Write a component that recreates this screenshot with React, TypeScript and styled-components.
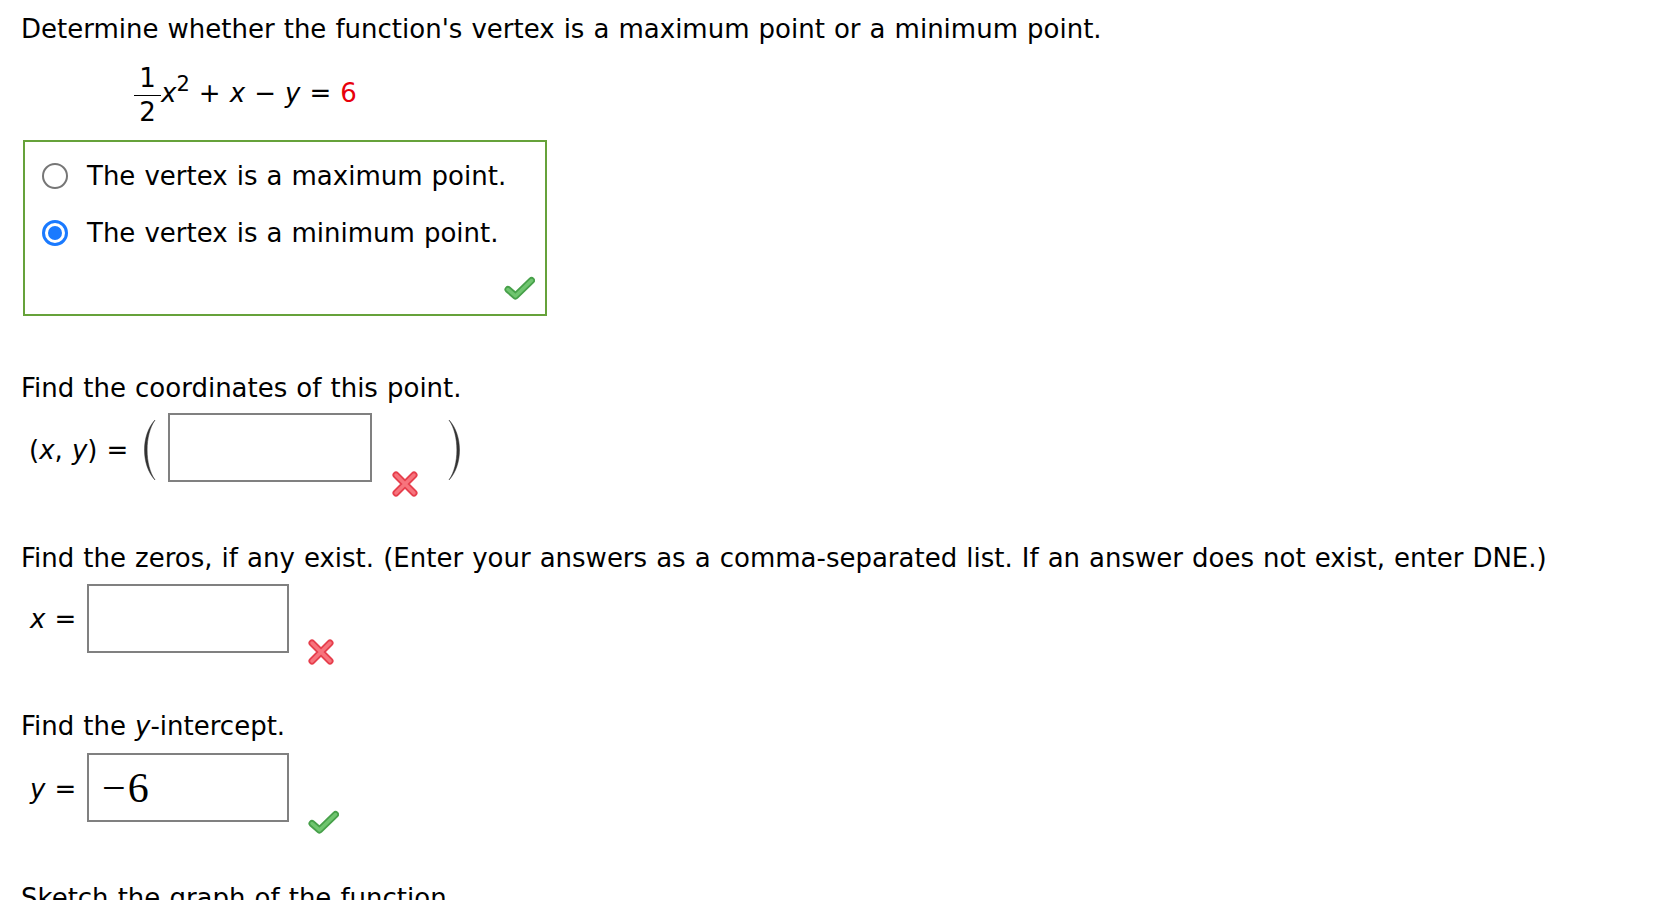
import React from 'react';
import styled, { createGlobalStyle } from 'styled-components';

const GlobalStyle = createGlobalStyle`
    body {
        margin: 0;
        background: #fff;
        color: #000;
        font-family: "DejaVu Sans", Verdana, sans-serif;
        font-size: 26px;
        line-height: 30px;
        word-spacing: 0.8px;
    }
`;

const Page = styled.div`
    padding: 14px 0 0 21px;
`;

const Prompt = styled.div<{ $gap?: number }>`
    margin-top: ${({ $gap }) => $gap ?? 0}px;
    white-space: nowrap;
`;

const Var = styled.i`
    font-style: oblique;
`;

const Equation = styled.div`
    display: flex;
    align-items: flex-start;
    margin: 23.5px 0 0 113px;
`;

const Frac = styled.div`
    display: flex;
    flex-direction: column;
    align-items: center;
    width: 27px;
`;

const Num = styled.div`
    line-height: 20px;
    margin-bottom: 7px;
`;

const Bar = styled.div`
    width: 100%;
    height: 1.5px;
    background: #000;
`;

const Den = styled.div`
    line-height: 20px;
    margin-top: 6px;
`;

const EqText = styled.div`
    margin-top: 10px;
    white-space: pre;
`;

const Sup = styled.span`
    font-size: 21px;
    vertical-align: 11px;
    line-height: 0;
`;

const Given = styled.span`
    color: #e8000b;
`;

const ChoiceBox = styled.div`
    box-sizing: border-box;
    display: flex;
    flex-direction: column;
    width: 524px;
    height: 176px;
    margin: 18px 0 0 2px;
    padding: 19px 10px 14px 17px;
    border: 2px solid #66a23a;
`;

const Option = styled.label<{ $gap?: number }>`
    display: flex;
    align-items: center;
    gap: 19px;
    height: 30px;
    margin-top: ${({ $gap }) => $gap ?? 0}px;
`;

const RadioMark = styled.span<{ $checked: boolean }>`
    box-sizing: border-box;
    flex: none;
    display: flex;
    align-items: center;
    justify-content: center;
    width: 26px;
    height: 26px;
    border-radius: 50%;
    border: ${({ $checked }) => ($checked ? '3px solid #1a7aff' : '2px solid #767676')};
    background: #fff;

    &::after {
        content: '';
        display: ${({ $checked }) => ($checked ? 'block' : 'none')};
        width: 14px;
        height: 14px;
        border-radius: 50%;
        background: #1a7aff;
    }
`;

const MarkRow = styled.div`
    display: flex;
    justify-content: flex-end;
    margin-top: auto;
`;

const AnswerRow = styled.div<{ $gap: number }>`
    display: flex;
    align-items: flex-start;
    margin-top: ${({ $gap }) => $gap}px;
`;

const RowLabel = styled.div<{ $width: number; $left: number; $top: number }>`
    box-sizing: border-box;
    width: ${({ $width }) => $width}px;
    padding-left: ${({ $left }) => $left}px;
    margin-top: ${({ $top }) => $top}px;
    white-space: pre;
`;

const Slot = styled.div<{ $width: number; $left?: number }>`
    box-sizing: border-box;
    display: flex;
    align-items: center;
    width: ${({ $width }) => $width}px;
    height: 69px;
    margin-left: ${({ $left }) => $left ?? 0}px;
    padding-left: 13px;
    border: 2px solid #808080;
    background: #fff;
`;

const MathValue = styled.span`
    font-family: "Liberation Serif", "Times New Roman", serif;
    font-size: 42px;
    line-height: 42px;
    letter-spacing: 2px;
`;

const Mark = styled.div<{ $left: number; $top: number }>`
    display: flex;
    margin-left: ${({ $left }) => $left}px;
    margin-top: ${({ $top }) => $top}px;
`;

const Delim = styled.svg<{ $left?: number }>`
    display: block;
    margin-top: 6px;
    margin-left: ${({ $left }) => $left ?? 0}px;
`;

const CheckIcon: React.FC = () => (
    <svg width="31" height="24" viewBox="0 0 31 24">
        <polyline points="4,13.5 11.5,20 27.5,4.5" fill="none" stroke="#47a04a" strokeWidth="7" strokeLinecap="round" strokeLinejoin="round" />
        <polyline points="4,13.5 11.5,20 27.5,4.5" fill="none" stroke="#6fc56f" strokeWidth="3.5" strokeLinecap="round" strokeLinejoin="round" />
    </svg>
);

const CrossIcon: React.FC = () => (
    <svg width="26" height="26" viewBox="0 0 26 26">
        <path d="M4 4 L22 22 M22 4 L4 22" stroke="#e63e4c" strokeWidth="7" strokeLinecap="round" />
        <path d="M4 4 L22 22 M22 4 L4 22" stroke="#f7747d" strokeWidth="3.5" strokeLinecap="round" />
    </svg>
);

const OpenParen: React.FC = () => (
    <Delim width="15" height="62" viewBox="0 0 15 62">
        <path d="M13 1 C-1 16 -1 46 13 61 C2.5 46 2.5 16 13 1 Z" fill="#333" stroke="#333" strokeWidth="0.5" />
    </Delim>
);

const CloseParen: React.FC<{ left: number }> = ({ left }) => (
    <Delim width="15" height="62" viewBox="0 0 15 62" $left={left}>
        <path d="M2 1 C16 16 16 46 2 61 C12.5 46 12.5 16 2 1 Z" fill="#333" stroke="#333" strokeWidth="0.5" />
    </Delim>
);

const App: React.FC = () => {
    return (
        <>
            <GlobalStyle />
            <Page>
                <Prompt>Determine whether the function's vertex is a maximum point or a minimum point.</Prompt>
                <Equation>
                    <Frac>
                        <Num>1</Num>
                        <Bar />
                        <Den>2</Den>
                    </Frac>
                    <EqText>
                        <Var>x</Var><Sup>2</Sup> + <Var>x</Var> − <Var>y</Var> = <Given>6</Given>
                    </EqText>
                </Equation>

                <ChoiceBox>
                    <Option>
                        <RadioMark $checked={false} />
                        The vertex is a maximum point.
                    </Option>
                    <Option $gap={27}>
                        <RadioMark $checked={true} />
                        The vertex is a minimum point.
                    </Option>
                    <MarkRow>
                        <CheckIcon />
                    </MarkRow>
                </ChoiceBox>

                <Prompt $gap={57}>Find the coordinates of this point.</Prompt>
                <AnswerRow $gap={10}>
                    <RowLabel $width={121} $left={8} $top={22}>
                        (<Var>x</Var>, <Var>y</Var>) =
                    </RowLabel>
                    <OpenParen />
                    <Slot $width={204} $left={11} />
                    <Mark $left={20} $top={58}><CrossIcon /></Mark>
                    <CloseParen left={29} />
                </AnswerRow>

                <Prompt $gap={46}>
                    Find the zeros, if any exist. (Enter your answers as a comma-separated list. If an answer does not exist, enter DNE.)
                </Prompt>
                <AnswerRow $gap={11}>
                    <RowLabel $width={66} $left={9} $top={20}>
                        <Var>x</Var> =
                    </RowLabel>
                    <Slot $width={202} />
                    <Mark $left={19} $top={55}><CrossIcon /></Mark>
                </AnswerRow>

                <Prompt $gap={46}>Find the <Var>y</Var>-intercept.</Prompt>
                <AnswerRow $gap={12}>
                    <RowLabel $width={66} $left={9} $top={21}>
                        <Var>y</Var> =
                    </RowLabel>
                    <Slot $width={202}>
                        <MathValue>−6</MathValue>
                    </Slot>
                    <Mark $left={19} $top={57}><CheckIcon /></Mark>
                </AnswerRow>

                <Prompt $gap={49}>Sketch the graph of the function.</Prompt>
            </Page>
        </>
    );
};

export default App;
